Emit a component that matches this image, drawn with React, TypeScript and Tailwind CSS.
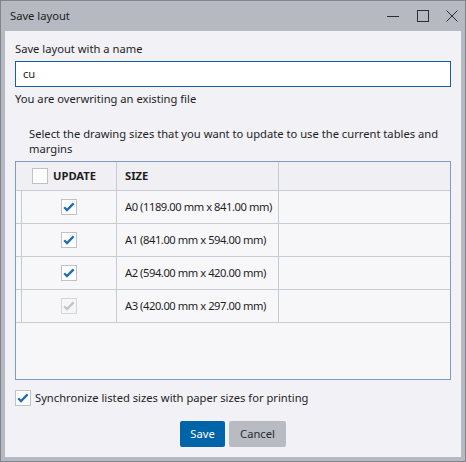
import React from "react";

const Check = ({ color = "#1f6db0" }: { color?: string }) => (
  <svg width="14" height="14" viewBox="0 0 14 14" className="block">
    <path d="M2.2 7.2 L5 10 L11.6 3.4" fill="none" stroke={color} strokeWidth="2.3" strokeLinecap="butt" strokeLinejoin="miter" />
  </svg>
);

const Box = ({ checked, disabled }: { checked?: boolean; disabled?: boolean }) => (
  <div
    className={`w-[16px] h-[16px] border flex items-center justify-center shrink-0 ${
      disabled ? "border-[#d3d5db] bg-[#f6f6f8]" : "border-[#bfc2ca] bg-white"
    }`}
  >
    {checked && <Check color={disabled ? "#c3c4c8" : "#1f6db0"} />}
  </div>
);

const rows = [
  { label: "A0 (1189.00 mm x 841.00 mm)", disabled: false },
  { label: "A1 (841.00 mm x 594.00 mm)", disabled: false },
  { label: "A2 (594.00 mm x 420.00 mm)", disabled: false },
  { label: "A3 (420.00 mm x 297.00 mm)", disabled: true },
];

export default function App() {
  return (
    <div
      className="w-[466px] h-[462px] bg-[#b6b9c1] border border-[#80848d] flex flex-col text-[11.2px] text-[#1e1e1e]"
      style={{ fontFamily: '"Noto Sans", "Open Sans", sans-serif' }}
    >
      <div className="h-[30px] flex items-center pl-[9px] pr-[7px]">
        <span className="flex-1 text-[#222]">Save layout</span>
        <svg width="12" height="12" viewBox="0 0 12 12" className="block">
          <path d="M0 6.5 H12" stroke="#2b2e35" strokeWidth="1" />
        </svg>
        <svg width="12" height="12" viewBox="0 0 12 12" className="block ml-[18px]">
          <rect x="0.5" y="0.5" width="11" height="11" fill="none" stroke="#2b2e35" strokeWidth="1" />
        </svg>
        <svg width="12" height="12" viewBox="0 0 12 12" className="block ml-[17px]">
          <path d="M0.5 0.5 L11.5 11.5 M11.5 0.5 L0.5 11.5" stroke="#2b2e35" strokeWidth="1" />
        </svg>
      </div>
      <div className="flex-1 mx-[4px] mb-[4px] bg-[#f1f1f6] px-[10px] pt-[10px] flex flex-col">
        <div className="h-[16px] leading-[16px]">Save layout with a name</div>
        <div className="mt-[4px] h-[26px] border border-[#1d5e99] bg-white flex items-center pl-[7px] leading-[16px]">
          cu
        </div>
        <div className="mt-[4px] h-[16px] leading-[16px]">You are overwriting an existing file</div>
        <div className="mt-[19px] pl-[14px] leading-[15px]">
          Select the drawing sizes that you want to update to use the current tables and margins
        </div>
        <div className="mt-[5px] h-[219px] border border-[#7f9cc0] bg-[#f7f7fa] flex flex-col">
          <div className="h-[29px] flex bg-[#efeff4] border-b border-[#c9cbd3]">
            <div className="w-[101px] border-r border-[#c9cbd3] flex items-center pl-[16px]">
              <Box />
              <span className="ml-[5px] font-bold">UPDATE</span>
            </div>
            <div className="w-[162px] border-r border-[#c9cbd3] flex items-center pl-[8px] font-bold">SIZE</div>
            <div className="flex-1" />
          </div>
          {rows.map((r) => (
            <div key={r.label} className="h-[33px] flex border-b border-[#c9cbd3]">
              <div className="w-[6px] border-r border-[#c9cbd3]" />
              <div className="w-[95px] border-r border-[#c9cbd3] flex items-center justify-center">
                <Box checked disabled={r.disabled} />
              </div>
              <div className="w-[162px] border-r border-[#c9cbd3] flex items-center pl-[8px] whitespace-nowrap tracking-[-0.45px]">
                {r.label}
              </div>
              <div className="flex-1" />
            </div>
          ))}
        </div>
        <div className="mt-[10px] flex items-center">
          <Box checked />
          <span className="ml-[4px] leading-[16px]">Synchronize listed sizes with paper sizes for printing</span>
        </div>
        <div className="mt-[15px] flex justify-center gap-[4px]">
          <button className="w-[45px] h-[26px] rounded-[2px] bg-[#0064a8] text-white leading-[16px]">Save</button>
          <button className="w-[57px] h-[26px] rounded-[2px] bg-[#b9bbc3] text-[#2a2a2a] leading-[16px]">Cancel</button>
        </div>
      </div>
    </div>
  );
}
